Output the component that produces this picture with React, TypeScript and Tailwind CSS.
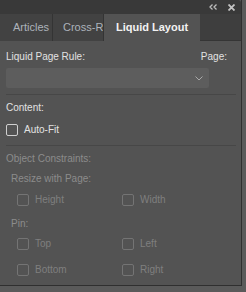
import React from "react";

function Box({ dim }: { dim?: boolean }) {
  return (
    <span
      className={
        "block h-[12px] w-[12px] shrink-0 rounded-[2px] border " +
        (dim ? "border-[#747474]" : "border-[#cfcfcf]")
      }
    />
  );
}

function Check({ label, dim, x }: { label: string; dim?: boolean; x: string }) {
  return (
    <div className={"flex items-center " + x}>
      <Box dim={dim} />
      <span
        className={
          "ml-[6px] leading-none " + (dim ? "text-[#7f7f7f]" : "text-[#e2e2e2]")
        }
      >
        {label}
      </span>
    </div>
  );
}

export default function App() {
  return (
    <div
      className="h-[292px] w-[246px] overflow-hidden bg-[#5a5a5a] text-[10px]"
      style={{ fontFamily: '"Liberation Sans", Arial, sans-serif' }}
    >
      <div className="flex h-[286px] w-[242px] flex-col border-r border-b border-[#2f2f2f] bg-[#535353]">
        {/* title bar */}
        <div className="flex h-[14px] items-center justify-end gap-[11px] rounded-tr-[3px] bg-[#393939] pr-[6px]">
          <svg width="8" height="6" viewBox="0 0 8 6" fill="none" stroke="#bdbdbd" strokeWidth="1.3">
            <path d="M3.5 0.5 1 3 3.5 5.5M7.5 0.5 5 3 7.5 5.5" />
          </svg>
          <svg width="7" height="7" viewBox="0 0 7 7" fill="none" stroke="#c4c4c4" strokeWidth="1.8">
            <path d="M0.5 0.5 6.5 6.5M6.5 0.5 0.5 6.5" />
          </svg>
        </div>

        {/* tabs */}
        <div className="flex h-[27px] bg-[#3e3e3e]">
          <div className="flex w-[53px] items-center border-r border-[#343434] bg-[#424242] pl-[13px] text-[11px] whitespace-nowrap text-[#adb3bb]">
            Articles
          </div>
          <div className="flex w-[51px] items-center overflow-hidden border-r border-[#343434] bg-[#424242] pl-[10px] text-[11px] whitespace-nowrap text-[#adb3bb]">
            Cross-R
          </div>
          <div className="flex w-[96px] items-center justify-center bg-[#535353] text-[11px] font-bold text-[#f2f2f2]">
            Liquid Layout
          </div>
          <div className="flex-1 border-b border-[#353535]" />
        </div>

        {/* body */}
        <div className="flex flex-col px-[6px] text-[#e2e2e2]">
          <div className="mt-[8px] flex h-[15px] items-center justify-between pr-[8px]">
            <span>Liquid Page Rule:</span>
            <span>Page:</span>
          </div>
          <div className="mt-[4px] flex h-[20px] w-[203px] items-center justify-end rounded-[2px] bg-[#5d5d5d] pr-[6px]">
            <svg width="8" height="5" viewBox="0 0 8 5" fill="none" stroke="#a9a9a9" strokeWidth="1">
              <path d="M0.5 0.5 4 4 7.5 0.5" />
            </svg>
          </div>
          <div className="mt-[6px] h-px w-[230px] bg-[#474747]" />

          <div className="mt-[5px] flex h-[15px] items-center">Content:</div>
          <Check label="Auto-Fit" x="mt-[9px] h-[12px]" />
          <div className="mt-[9px] h-px w-[230px] bg-[#474747]" />

          <div className="mt-[5px] flex h-[15px] items-center text-[#8c8c8c]">
            Object Constraints:
          </div>
          <div className="mt-[5px] flex h-[15px] items-center pl-[5px] text-[#8c8c8c]">
            Resize with Page:
          </div>
          <div className="mt-[8px] grid h-[12px] grid-cols-[105px_1fr] pl-[11px]">
            <Check label="Height" dim x="" />
            <Check label="Width" dim x="" />
          </div>
          <div className="mt-[10px] flex h-[15px] items-center pl-[5px] text-[#8c8c8c]">
            Pin:
          </div>
          <div className="mt-[7px] grid h-[12px] grid-cols-[105px_1fr] pl-[11px]">
            <Check label="Top" dim x="" />
            <Check label="Left" dim x="" />
          </div>
          <div className="mt-[14px] grid h-[12px] grid-cols-[105px_1fr] pl-[11px]">
            <Check label="Bottom" dim x="" />
            <Check label="Right" dim x="" />
          </div>
        </div>
      </div>
    </div>
  );
}
